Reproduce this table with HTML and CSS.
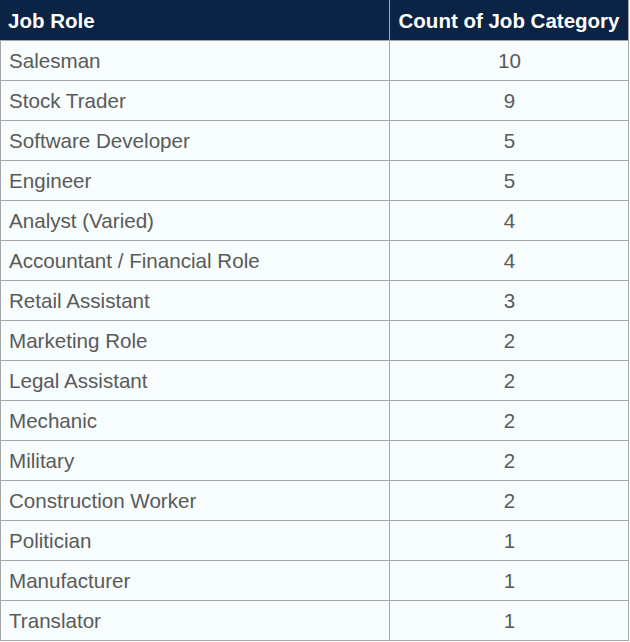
FILE: index.html
```html
<!DOCTYPE html>
<html>
<head>
<meta charset="utf-8">
<link rel="stylesheet" href="styles.css">
</head>
<body>
<table class="grid">
  <thead>
    <tr><th class="role">Job Role</th><th class="count">Count of Job Category</th></tr>
  </thead>
  <tbody>
    <tr><td class="role">Salesman</td><td class="count">10</td></tr>
    <tr><td class="role">Stock Trader</td><td class="count">9</td></tr>
    <tr><td class="role">Software Developer</td><td class="count">5</td></tr>
    <tr><td class="role">Engineer</td><td class="count">5</td></tr>
    <tr><td class="role">Analyst (Varied)</td><td class="count">4</td></tr>
    <tr><td class="role">Accountant / Financial Role</td><td class="count">4</td></tr>
    <tr><td class="role">Retail Assistant</td><td class="count">3</td></tr>
    <tr><td class="role">Marketing Role</td><td class="count">2</td></tr>
    <tr><td class="role">Legal Assistant</td><td class="count">2</td></tr>
    <tr><td class="role">Mechanic</td><td class="count">2</td></tr>
    <tr><td class="role">Military</td><td class="count">2</td></tr>
    <tr><td class="role">Construction Worker</td><td class="count">2</td></tr>
    <tr><td class="role">Politician</td><td class="count">1</td></tr>
    <tr><td class="role">Manufacturer</td><td class="count">1</td></tr>
    <tr><td class="role">Translator</td><td class="count">1</td></tr>
  </tbody>
</table>
</body>
</html>
```

FILE: styles.css
```css
html, body {
  margin: 0;
  padding: 0;
  background: #ffffff;
}
.grid {
  border-collapse: collapse;
  width: 629px;
  table-layout: fixed;
  font-family: "Liberation Sans", Arial, sans-serif;
  font-size: 20.6px;
}
.grid th, .grid td {
  border: 1px solid #a4a7a8;
  height: 40px;
  padding: 1px 7px 0 8px;
  box-sizing: border-box;
  white-space: nowrap;
}
.grid th.role { width: 389px; }
.grid th {
  background: #0b2445;
  color: #ffffff;
  font-weight: bold;
  font-size: 20.5px;
  text-align: left;
  border-color: #0b2445 #a4a7a8 #a4a7a8 #0b2445;
  padding-left: 7px;
}
.grid th.count {
  text-align: center;
}
.grid td {
  background: #f7fcfc;
  color: #5a5a5a;
}
.grid td.count {
  text-align: center;
}
```
